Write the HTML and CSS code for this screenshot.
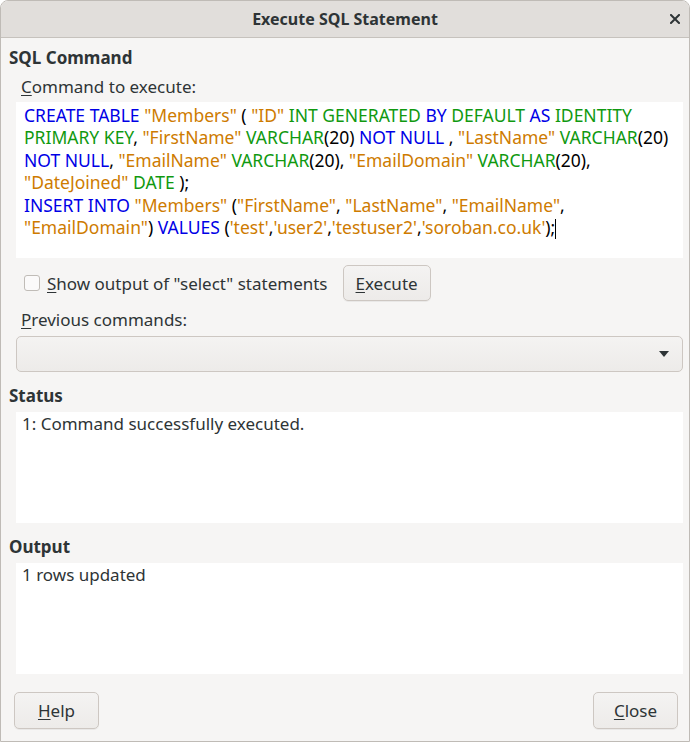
FILE: index.html
```html
<!DOCTYPE html>
<html lang="en">
<head>
  <meta charset="UTF-8" />
  <title>Execute SQL Statement</title>
  <link rel="stylesheet" href="styles.css">
</head>
<body>
  <div class="window">
    <div class="titlebar">
      <span class="title">Execute SQL Statement</span>
      <button class="close-btn" type="button" aria-label="Close">
        <svg width="10" height="10" viewBox="0 0 10 10">
          <path d="M1 1 L9 9 M9 1 L1 9" stroke="#2e3436" stroke-width="2" stroke-linecap="square"/>
        </svg>
      </button>
    </div>

    <div class="content">
      <h3 class="section-title first">SQL Command</h3>
      <div class="label"><u>C</u>ommand to execute:</div>
      <div class="editor">
        <span class="kw">CREATE TABLE</span> <span class="str">"Members"</span> ( <span class="str">"ID"</span> <span class="ty">INT GENERATED</span> <span class="kw">BY</span> <span class="ty">DEFAULT</span> <span class="kw">AS</span> <span class="ty">IDENTITY PRIMARY KEY</span>, <span class="str">"FirstName"</span> <span class="ty">VARCHAR</span>(20) <span class="kw">NOT NULL</span> , <span class="str">"LastName"</span> <span class="ty">VARCHAR</span>(20) <span class="kw">NOT NULL</span>, <span class="str">"EmailName"</span> <span class="ty">VARCHAR</span>(20), <span class="str">"EmailDomain"</span> <span class="ty">VARCHAR</span>(20), <span class="str">"DateJoined"</span> <span class="ty">DATE</span> );<br>
        <span class="kw">INSERT INTO</span> <span class="str">"Members"</span> (<span class="str">"FirstName"</span>, <span class="str">"LastName"</span>, <span class="str">"EmailName"</span>, <span class="str">"EmailDomain"</span>) <span class="kw">VALUES</span> (<span class="str">'test'</span>,<span class="str">'user2'</span>,<span class="str">'testuser2'</span>,<span class="str">'soroban.co.uk'</span>);<span class="caret"></span>
      </div>

      <div class="exec-row">
        <label class="check">
          <span class="box"></span>
          <span><u>S</u>how output of "select" statements</span>
        </label>
        <button class="btn" type="button"><u>E</u>xecute</button>
      </div>

      <div class="label prev"><u>P</u>revious commands:</div>
      <div class="combo">
        <svg width="10" height="6" viewBox="0 0 10 6">
          <path d="M0 0 H10 L5 6 Z" fill="#2e3436"/>
        </svg>
      </div>

      <h3 class="section-title">Status</h3>
      <div class="panel">1: Command successfully executed.</div>

      <h3 class="section-title">Output</h3>
      <div class="panel">1 rows updated</div>

      <div class="footer">
        <button class="btn wide" type="button"><u>H</u>elp</button>
        <button class="btn wide" type="button"><u>C</u>lose</button>
      </div>
    </div>
  </div>
</body>
</html>
```

FILE: styles.css
```css
* {
  box-sizing: border-box;
}

body {
  margin: 0;
  background: #fff;
  font-family: "Noto Sans", Lato, sans-serif;
  font-size: 17px;
  color: #2e3436;
}

.window {
  width: 690px;
  height: 742px;
  background: #f6f5f4;
  border: 1px solid #bfbbb6;
  border-radius: 8px 8px 0 0;
  overflow: hidden;
  display: flex;
  flex-direction: column;
}

.titlebar {
  height: 37px;
  flex: none;
  background: #e1dedb;
  border-bottom: 1px solid #c6c2bd;
  display: flex;
  align-items: center;
  justify-content: center;
  position: relative;
}

.title {
  font-weight: bold;
  font-size: 16px;
}

.close-btn {
  position: absolute;
  right: 9px;
  top: 13px;
  width: 10px;
  height: 10px;
  padding: 0;
  border: none;
  background: none;
  display: flex;
}

.content {
  flex: 1;
  padding: 0 6px 0 15px;
  display: flex;
  flex-direction: column;
}

u {
  text-decoration-thickness: 1px;
  text-underline-offset: 2px;
}

.section-title {
  margin: 13px 0 0 -7px;
  font-size: 17px;
  line-height: 22px;
  font-weight: bold;
}

.section-title.first {
  margin-top: 9px;
}

.label {
  margin: 7px 0 0 5px;
  line-height: 22px;
}

.label.prev {
  margin-top: 8px;
}

.editor {
  margin-top: 4px;
  height: 156px;
  background: #fff;
  padding: 2px 10px 0 8px;
  font-size: 17.5px;
  line-height: 22.4px;
  color: #000;
}

.kw { color: #0000e6; }
.ty { color: #109910; }
.str { color: #ce7b00; }

.caret {
  display: inline-block;
  width: 1px;
  height: 20px;
  background: #000;
  vertical-align: -5px;
}

.exec-row {
  margin-top: 7px;
  display: flex;
  align-items: center;
}

.check {
  display: flex;
  align-items: center;
  gap: 7px;
  margin-left: 8px;
  margin-right: 15px;
}

.box {
  width: 16px;
  height: 16px;
  border: 1px solid #c0bcb7;
  border-radius: 3px;
  background: #fbfafa;
}

.btn {
  font: inherit;
  color: #2e3436;
  height: 36px;
  padding: 0 12px;
  border: 1px solid #cdc7c2;
  border-radius: 5px;
  background: linear-gradient(#f4f3f2, #edebe9);
  box-shadow: 0 1px rgba(0, 0, 0, 0.05);
}

.combo {
  margin-top: 5px;
  height: 36px;
  border: 1px solid #cdc7c2;
  border-radius: 5px;
  background: linear-gradient(#f4f3f2, #edebe9);
  display: flex;
  align-items: center;
  justify-content: flex-end;
  padding-right: 13px;
}

.panel {
  margin-top: 5px;
  height: 111px;
  background: #fff;
  padding: 1px 6px;
  line-height: 22px;
}

.footer {
  margin: 18px 5px 0 -2px;
  display: flex;
  justify-content: space-between;
}

.btn.wide {
  width: 85px;
  height: 37px;
}
```
